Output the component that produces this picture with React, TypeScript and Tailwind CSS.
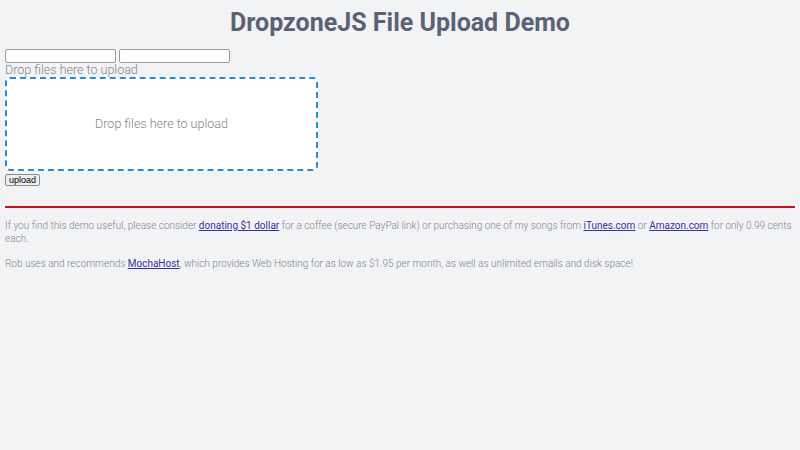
export default function App() {
  return (
    <div
      className="min-h-[450px] w-full bg-[#f2f3f5] px-[5px] text-[#80858d]"
      style={{ fontFamily: "Roboto, 'Liberation Sans', sans-serif" }}
    >
      <h1 className="pt-[8px] text-center text-[25px] font-bold leading-[30px] text-[#5b6274]">
        DropzoneJS File Upload Demo
      </h1>

      <form className="mt-[11px]">
        <div className="flex gap-[3px]">
          <input
            type="text"
            className="h-[14px] w-[111px] rounded-[2px] border border-[#9a9a9a] bg-white"
          />
          <input
            type="text"
            className="h-[14px] w-[111px] rounded-[2px] border border-[#9a9a9a] bg-white"
          />
        </div>
        <div className="text-[12.5px] font-light leading-[14px] text-[#80858d]">
          Drop files here to upload
        </div>
        <div className="flex h-[94px] w-[313px] items-center justify-center rounded-[5px] border-2 border-dashed border-[#2a8bd0] bg-white">
          <span className="text-[12.5px] font-light text-[#80858d]">Drop files here to upload</span>
        </div>
        <button
          type="button"
          className="mt-[3px] block h-[12px] rounded-[2px] border border-[#8a8a8a] bg-[#efefef] px-[3px] text-[9px] leading-[9px] text-black"
          style={{ fontFamily: "'Liberation Sans', Arial, sans-serif" }}
        >
          upload
        </button>
      </form>

      <hr className="mt-[20px] border-t-2 border-[#c8161d]" />

      <div className="pt-[11px] text-[10px] font-light leading-[13px] text-[#80858d]">
        <p>
          If you find this demo useful, please consider{" "}
          <a href="#" className="font-normal text-[#3a3099] underline">
            donating $1 dollar
          </a>{" "}
          for a coffee (secure PayPal link) or purchasing one of my songs from{" "}
          <a href="#" className="font-normal text-[#3a3099] underline">
            iTunes.com
          </a>{" "}
          or{" "}
          <a href="#" className="font-normal text-[#3a3099] underline">
            Amazon.com
          </a>{" "}
          for only 0.99 cents each.
        </p>
        <p className="mt-[12px]">
          Rob uses and recommends{" "}
          <a href="#" className="font-normal text-[#3a3099] underline">
            MochaHost
          </a>
          , which provides Web Hosting for as low as $1.95 per month, as well as unlimited emails and disk space!
        </p>
      </div>
    </div>
  );
}
